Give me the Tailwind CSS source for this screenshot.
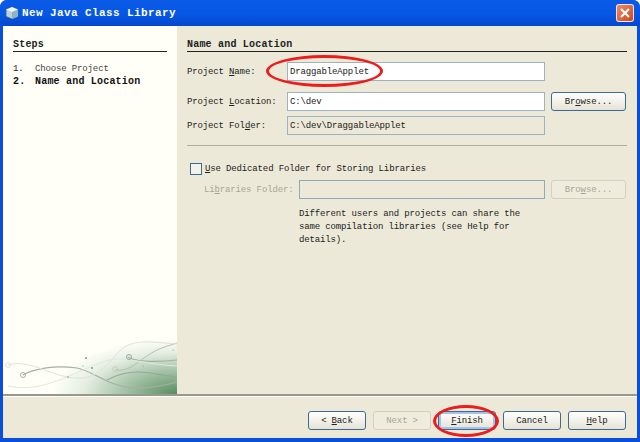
<!DOCTYPE html>
<html>
<head>
<meta charset="utf-8">
<script src="https://cdn.jsdelivr.net/npm/@tailwindcss/browser@4"></script>
</head>
<body class="m-0 bg-white">
<div class="relative w-[640px] h-[442px] overflow-hidden flex flex-col rounded-t-[7px] bg-[#0a4fdc] font-['Liberation_Mono',monospace] text-[9px] tracking-[-0.14px] text-[#222] leading-[12px]">
  <!-- title bar -->
  <div class="h-[26px] shrink-0 flex items-center pl-[5px] pr-[6px] bg-gradient-to-b from-[#0a5ae6] via-[#0658e4] to-[#0448d0]">
    <svg width="14" height="14" viewBox="0 0 14 14" class="shrink-0">
      <path d="M7 1 L13 3.5 V10.5 L7 13 L1 10.5 V3.5 Z" fill="#b9d3e4" stroke="#41626f" stroke-width="0.8"/>
      <path d="M1 3.5 L7 6 L13 3.5 L7 1 Z" fill="#eef6fa"/>
      <path d="M7 6 V13 L13 10.5 V3.5 Z" fill="#8fb2c6"/>
    </svg>
    <span class="ml-[3px] text-white font-bold text-[11px] tracking-[0.4px]">New Java Class Library</span>
    <div class="ml-auto w-[18px] h-[18px] rounded-[3px] border border-white/80 bg-gradient-to-br from-[#ea8a66] to-[#cf4417] flex items-center justify-center">
      <svg width="12" height="12" viewBox="0 0 12 12"><path d="M2 2 L10 10 M10 2 L2 10" stroke="#fff" stroke-width="2.2"/></svg>
    </div>
  </div>
  <!-- client area -->
  <div class="mx-[3px] mb-[4px] flex-1 flex flex-col bg-[#ece9d8]">
    <div class="h-[368px] flex">
      <!-- steps -->
      <div class="relative w-[174px] shrink-0 bg-[#fffff8] pl-[10px] pr-[10px] pt-[12px] overflow-hidden">
        <div class="font-bold text-[10px] tracking-[0.2px] text-[#222] h-[12px] pt-px border-b border-[#222] box-content">Steps</div>
        <div class="mt-[11px] flex h-[13px]"><span class="w-[22px]">1.</span><span class="text-[#444]">Choose Project</span></div>
        <div class="flex h-[13px] font-bold text-[10px] tracking-[0.2px] text-[#111]"><span class="w-[22px]">2.</span><span>Name and Location</span></div>
        <div class="absolute left-0 right-0 bottom-0 h-[60px] bg-[radial-gradient(ellipse_125px_55px_at_100%_100%,#588c60,#a9c6ac_45%,#e4ede0_75%,transparent)]"></div>
        <svg class="absolute left-0 bottom-0" width="174" height="58" viewBox="0 0 174 58" fill="none">
          <path d="M20 39 C30 33 50 29 74 32 C90 35 105 50 130 52 C145 53 160 50 174 46" stroke="#a4b0a4" stroke-width="1.2"/>
          <path d="M125 21 C130 25 150 27 174 24" stroke="#a4b0a4" stroke-width="1.2"/>
          <path d="M112 34 C125 36 132 28 144 20 C155 12 165 10 174 7" stroke="#b4beb4" stroke-width="1"/>
          <path d="M104 44 C115 38 125 36 135 36 C150 36 160 40 174 41" stroke="#98a898" stroke-width="1.2"/>
          <path d="M5 29 C30 22 50 44 80 42 C100 40 110 20 120 12 C135 2 155 7 174 8" stroke="#dde3da" stroke-width="1"/>
          <path d="M5 50 C40 58 70 36 100 26 C120 18 135 28 174 30" stroke="#e2e7df" stroke-width="1"/>
          <circle cx="20" cy="39" r="2.5" stroke="#a4b0a4" stroke-width="1"/>
          <circle cx="126" cy="21" r="2.5" stroke="#98a898" stroke-width="1"/>
          <circle cx="112" cy="33" r="2.5" stroke="#c4cec4" stroke-width="1"/>
          <circle cx="5" cy="29" r="2.5" stroke="#dfe5dc" stroke-width="1"/>
          <g fill="#8a968a"><circle cx="83" cy="22" r="1"/><circle cx="89" cy="32" r="1"/><circle cx="65" cy="41" r="0.8"/><circle cx="80" cy="30" r="0.6"/><circle cx="140" cy="30" r="0.6"/><circle cx="170" cy="14" r="0.6"/></g>
        </svg>
      </div>
      <!-- form -->
      <div class="flex-1 pl-[10px] pr-[10px] pt-[12px]">
        <div class="font-bold text-[10px] tracking-[0.2px] h-[12px] pt-px border-b border-[#222] box-content">Name and Location</div>
        <div class="mt-[10px] h-[19px] flex items-center">
          <span class="w-[100px]">Project <u>N</u>ame:</span>
          <div class="w-[258px] h-[19px] bg-white border border-[#9db3c4] pl-[2px] flex items-center">DraggableApplet</div>
        </div>
        <div class="mt-[11px] h-[19px] flex items-center">
          <span class="w-[100px]">Project <u>L</u>ocation:</span>
          <div class="w-[258px] h-[19px] bg-white border border-[#9db3c4] pl-[2px] flex items-center">C:\dev</div>
          <div class="ml-[6px] w-[75px] h-[19px] rounded-[3px] border border-[#3c6a94] bg-gradient-to-b from-white to-[#e6e3d5] flex items-center justify-center">Br<u>o</u>wse...</div>
        </div>
        <div class="mt-[5px] h-[19px] flex items-center">
          <span class="w-[100px]">Project Fol<u>d</u>er:</span>
          <div class="w-[258px] h-[19px] bg-[#ece9d8] border border-[#9db3c4] pl-[2px] flex items-center">C:\dev\DraggableApplet</div>
        </div>
        <div class="mt-[10px] h-px bg-[#b0aea2]"></div>
        <div class="mt-[16px] h-[13px] flex items-center pl-[3px]">
          <div class="w-[12px] h-[12px] border border-[#3c6a94] bg-[#f4f3ea]"></div>
          <span class="ml-[3px]"><u>U</u>se Dedicated Folder for Storing Libraries</span>
        </div>
        <div class="mt-[5px] h-[19px] flex items-center">
          <span class="pl-[17px] w-[112px] text-[#a8a598]">Li<u>b</u>raries Folder:</span>
          <div class="w-[246px] h-[19px] bg-[#ece9d8] border border-[#8fa9bf]"></div>
          <div class="ml-[6px] w-[75px] h-[19px] rounded-[3px] border border-[#d3d0c0] bg-[#efecde] text-[#a8a598] flex items-center justify-center">Bro<u>w</u>se...</div>
        </div>
        <div class="mt-[9px] ml-[112px] w-[240px] leading-[13px]">Different users and projects can share the same compilation libraries (see Help for details).</div>
      </div>
    </div>
    <!-- footer -->
    <div class="h-[2px] bg-[#9a988c]"></div>
    <div class="h-px bg-white"></div>
    <div class="flex-1 flex justify-end gap-[7px] pr-[11px] pt-[14px]">
      <div class="w-[58px] h-[19px] rounded-[3px] border border-[#3c6a94] bg-gradient-to-b from-white to-[#e6e3d5] flex items-center justify-center gap-[5px]"><span>&lt;</span><span><u>B</u>ack</span></div>
      <div class="w-[58px] h-[19px] rounded-[3px] border border-[#d3d0c0] bg-[#efecde] text-[#a8a598] flex items-center justify-center gap-[5px]"><span>Next</span><span>&gt;</span></div>
      <div class="w-[58px] h-[19px] rounded-[3px] border border-[#3c6a94] shadow-[inset_0_0_0_2px_#a4c2ea] bg-gradient-to-b from-white to-[#e6e3d5] flex items-center justify-center"><u>F</u>inish</div>
      <div class="w-[58px] h-[19px] rounded-[3px] border border-[#3c6a94] bg-gradient-to-b from-white to-[#e6e3d5] flex items-center justify-center">Cancel</div>
      <div class="w-[58px] h-[19px] rounded-[3px] border border-[#3c6a94] bg-gradient-to-b from-white to-[#e6e3d5] flex items-center justify-center"><u>H</u>elp</div>
    </div>
  </div>
  <!-- red annotation ovals -->
  <div class="absolute left-[266px] top-[55px] w-[117px] h-[32px] rounded-[50%] border-[3px] border-[#ee1c1c]"></div>
  <div class="absolute left-[433px] top-[405px] w-[66px] h-[32px] rounded-[50%] border-[3px] border-[#ee1c1c]"></div>
</div>
</body>
</html>
